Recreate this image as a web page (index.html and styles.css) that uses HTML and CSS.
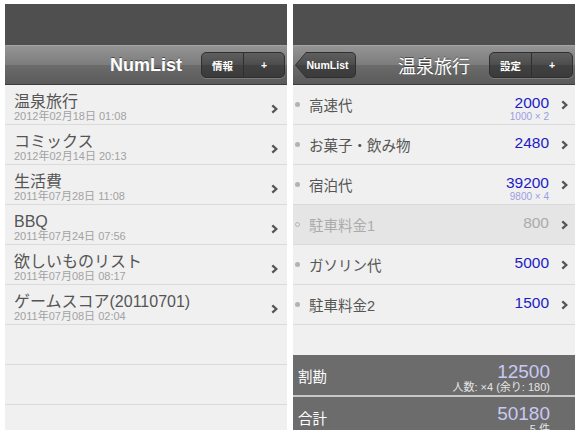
FILE: index.html
```html
<!DOCTYPE html>
<html lang="ja">
<head>
    <meta charset="UTF-8">
    <meta name="viewport" content="width=device-width, initial-scale=1.0">
    <title>NumList</title>
    <link rel="stylesheet" href="styles.css">
</head>
<body>

<div class="screens">

    <!-- リスト一覧 -->
    <section class="phone">
        <div class="status"></div>
        <header class="navbar">
            <div class="nav-left"></div>
            <h1 class="nav-title">NumList</h1>
            <div class="nav-right">
                <div class="seg"><span>情報</span><span>+</span></div>
            </div>
        </header>
        <ul class="lists">
            <li class="list-row">
                <div class="list-text">
                    <div class="list-name">温泉旅行</div>
                    <div class="list-date">2012年02月18日 01:08</div>
                </div>
                <svg class="chev" width="7" height="10" viewBox="0 0 7 10"><polyline points="1.3,1.3 5.3,5 1.3,8.7"/></svg>
            </li>
            <li class="list-row">
                <div class="list-text">
                    <div class="list-name">コミックス</div>
                    <div class="list-date">2012年02月14日 20:13</div>
                </div>
                <svg class="chev" width="7" height="10" viewBox="0 0 7 10"><polyline points="1.3,1.3 5.3,5 1.3,8.7"/></svg>
            </li>
            <li class="list-row">
                <div class="list-text">
                    <div class="list-name">生活費</div>
                    <div class="list-date">2011年07月28日 11:08</div>
                </div>
                <svg class="chev" width="7" height="10" viewBox="0 0 7 10"><polyline points="1.3,1.3 5.3,5 1.3,8.7"/></svg>
            </li>
            <li class="list-row">
                <div class="list-text">
                    <div class="list-name">BBQ</div>
                    <div class="list-date">2011年07月24日 07:56</div>
                </div>
                <svg class="chev" width="7" height="10" viewBox="0 0 7 10"><polyline points="1.3,1.3 5.3,5 1.3,8.7"/></svg>
            </li>
            <li class="list-row">
                <div class="list-text">
                    <div class="list-name">欲しいものリスト</div>
                    <div class="list-date">2011年07月08日 08:17</div>
                </div>
                <svg class="chev" width="7" height="10" viewBox="0 0 7 10"><polyline points="1.3,1.3 5.3,5 1.3,8.7"/></svg>
            </li>
            <li class="list-row">
                <div class="list-text">
                    <div class="list-name">ゲームスコア(20110701)</div>
                    <div class="list-date">2011年07月08日 02:04</div>
                </div>
                <svg class="chev" width="7" height="10" viewBox="0 0 7 10"><polyline points="1.3,1.3 5.3,5 1.3,8.7"/></svg>
            </li>
            <li class="list-row"></li>
            <li class="list-row"></li>
            <li class="list-row"></li>
        </ul>
    </section>

    <!-- リスト詳細 -->
    <section class="phone">
        <div class="status"></div>
        <header class="navbar">
            <div class="nav-left">
                <div class="back"><span>NumList</span></div>
            </div>
            <h1 class="nav-title jp">温泉旅行</h1>
            <div class="nav-right">
                <div class="seg"><span>設定</span><span>+</span></div>
            </div>
        </header>
        <ul class="items">
            <li class="item">
                <i class="dot"></i>
                <span class="item-name">高速代</span>
                <div class="val-box"><span class="val">2000</span><span class="sub">1000 × 2</span></div>
                <svg class="chev" width="7" height="10" viewBox="0 0 7 10"><polyline points="1.3,1.3 5.3,5 1.3,8.7"/></svg>
            </li>
            <li class="item">
                <i class="dot"></i>
                <span class="item-name">お菓子・飲み物</span>
                <div class="val-box"><span class="val">2480</span></div>
                <svg class="chev" width="7" height="10" viewBox="0 0 7 10"><polyline points="1.3,1.3 5.3,5 1.3,8.7"/></svg>
            </li>
            <li class="item">
                <i class="dot"></i>
                <span class="item-name">宿泊代</span>
                <div class="val-box"><span class="val">39200</span><span class="sub">9800 × 4</span></div>
                <svg class="chev" width="7" height="10" viewBox="0 0 7 10"><polyline points="1.3,1.3 5.3,5 1.3,8.7"/></svg>
            </li>
            <li class="item off">
                <i class="dot"></i>
                <span class="item-name">駐車料金1</span>
                <div class="val-box"><span class="val">800</span></div>
                <svg class="chev" width="7" height="10" viewBox="0 0 7 10"><polyline points="1.3,1.3 5.3,5 1.3,8.7"/></svg>
            </li>
            <li class="item">
                <i class="dot"></i>
                <span class="item-name">ガソリン代</span>
                <div class="val-box"><span class="val">5000</span></div>
                <svg class="chev" width="7" height="10" viewBox="0 0 7 10"><polyline points="1.3,1.3 5.3,5 1.3,8.7"/></svg>
            </li>
            <li class="item">
                <i class="dot"></i>
                <span class="item-name">駐車料金2</span>
                <div class="val-box"><span class="val">1500</span></div>
                <svg class="chev" width="7" height="10" viewBox="0 0 7 10"><polyline points="1.3,1.3 5.3,5 1.3,8.7"/></svg>
            </li>
        </ul>

        <div class="summary">
            <div class="sum-row">
                <span class="sum-name">割勘</span>
                <div class="sum-box"><span class="sum-val">12500</span><span class="sum-sub">人数: ×4 (余り: 180)</span></div>
            </div>
            <div class="sum-row">
                <span class="sum-name">合計</span>
                <div class="sum-box"><span class="sum-val">50180</span><span class="sum-sub">5 件</span></div>
            </div>
        </div>
    </section>

</div>

</body>
</html>
```

FILE: styles.css
```css
* {
    box-sizing: border-box;
    margin: 0;
    padding: 0;
}
body {
    background: #fff;
    font-family: "Liberation Sans", "Noto Sans CJK JP", sans-serif;
}
ul {
    list-style: none;
}
.screens {
    display: flex;
    gap: 6px;
    padding: 4px 5px 0;
}
.phone {
    width: 282px;
    height: 426px;
    overflow: hidden;
    background: #f0f0f0;
    display: flex;
    flex-direction: column;
}
.status {
    height: 41px;
    flex-shrink: 0;
    background: #4f4f4f;
}

/* ナビゲーションバー */
.navbar {
    height: 40px;
    flex-shrink: 0;
    display: grid;
    grid-template-columns: 1fr auto 1fr;
    align-items: center;
    padding: 0 2px;
    background: linear-gradient(#949494, #7c7c7c 50%, #6b6b6b 51%, #5a5a5a);
    border-top: 1px solid #a5a5a5;
    border-bottom: 1px solid #3c3c3c;
}
.nav-left {
    justify-self: start;
}
.nav-right {
    justify-self: end;
}
.nav-title {
    font-size: 18px;
    font-weight: bold;
    color: #fff;
    text-shadow: 0 -1px 0 rgba(0, 0, 0, .45);
}
.nav-title.jp {
    font-weight: normal;
}
.seg {
    display: flex;
    height: 26px;
    border: 1px solid #2f2f2f;
    border-radius: 5px;
    overflow: hidden;
    background: linear-gradient(#5f5f5f, #4c4c4c 50%, #414141 51%, #3b3b3b);
    box-shadow: 0 1px 0 rgba(255, 255, 255, .18);
}
.seg span {
    width: 41px;
    display: flex;
    align-items: center;
    justify-content: center;
    color: #fff;
    font-size: 10.5px;
    font-weight: bold;
}
.seg span + span {
    border-left: 1px solid #2f2f2f;
}
.back {
    width: 61px;
    height: 26px;
    padding: 1px;
    background: #2f2f2f;
    border-radius: 0 5px 5px 0;
    clip-path: polygon(11px 0, 100% 0, 100% 100%, 11px 100%, 0 50%);
}
.back span {
    display: flex;
    align-items: center;
    justify-content: center;
    height: 100%;
    padding-left: 4px;
    background: linear-gradient(#5f5f5f, #4c4c4c 50%, #414141 51%, #3b3b3b);
    border-radius: 0 4px 4px 0;
    clip-path: polygon(10px 0, 100% 0, 100% 100%, 10px 100%, 0 50%);
    color: #fff;
    font-size: 10.5px;
    font-weight: bold;
}

/* 矢印 */
.chev {
    flex-shrink: 0;
    align-self: center;
}
.chev polyline {
    fill: none;
    stroke: #555;
    stroke-width: 2.3;
}

/* リスト一覧 */
.list-row {
    height: 40px;
    display: flex;
    align-items: flex-start;
    padding: 8px 9px 0;
    border-bottom: 1px solid #dadada;
}
.list-text {
    flex: 1;
}
.list-name {
    font-size: 16px;
    line-height: 17px;
    color: #555;
}
.list-date {
    font-size: 11px;
    line-height: 12px;
    color: #a2a2a2;
}

/* 項目 */
.item {
    height: 40px;
    display: flex;
    align-items: center;
    padding: 0 7px 0 2px;
    border-bottom: 1px solid #dadada;
}
.dot {
    width: 5px;
    height: 5px;
    border-radius: 50%;
    background: #b3b3b3;
    margin-right: 9px;
}
.item-name {
    flex: 1;
    font-size: 14.5px;
    color: #555;
}
.val-box {
    align-self: flex-start;
    display: flex;
    flex-direction: column;
    align-items: flex-end;
    padding-top: 9px;
    margin-right: 12px;
}
.val {
    font-size: 15.5px;
    line-height: 17px;
    color: #1c1cc6;
}
.sub {
    font-size: 10px;
    line-height: 11px;
    color: #9c9ce4;
}
.item.off {
    background: #e5e5e5;
}
.off .item-name,
.off .val {
    color: #ababab;
}
.off .dot {
    background: none;
    border: 1px solid #b3b3b3;
}

/* 集計 */
.summary {
    margin-top: 30px;
    background: #6c6c6c;
}
.sum-row {
    height: 40px;
    display: flex;
    align-items: flex-start;
    padding: 0 25px 0 5px;
}
.sum-row + .sum-row {
    height: 42px;
    border-top: 2px solid #c8c8c8;
}
.sum-name {
    flex: 1;
    align-self: center;
    font-size: 14.5px;
    color: #fff;
}
.sum-box {
    display: flex;
    flex-direction: column;
    align-items: flex-end;
    padding-top: 8px;
}
.sum-val {
    font-size: 19px;
    line-height: 18px;
    color: #c9c9f4;
}
.sum-sub {
    font-size: 11px;
    line-height: 12px;
    color: #e4e4e4;
}
```
